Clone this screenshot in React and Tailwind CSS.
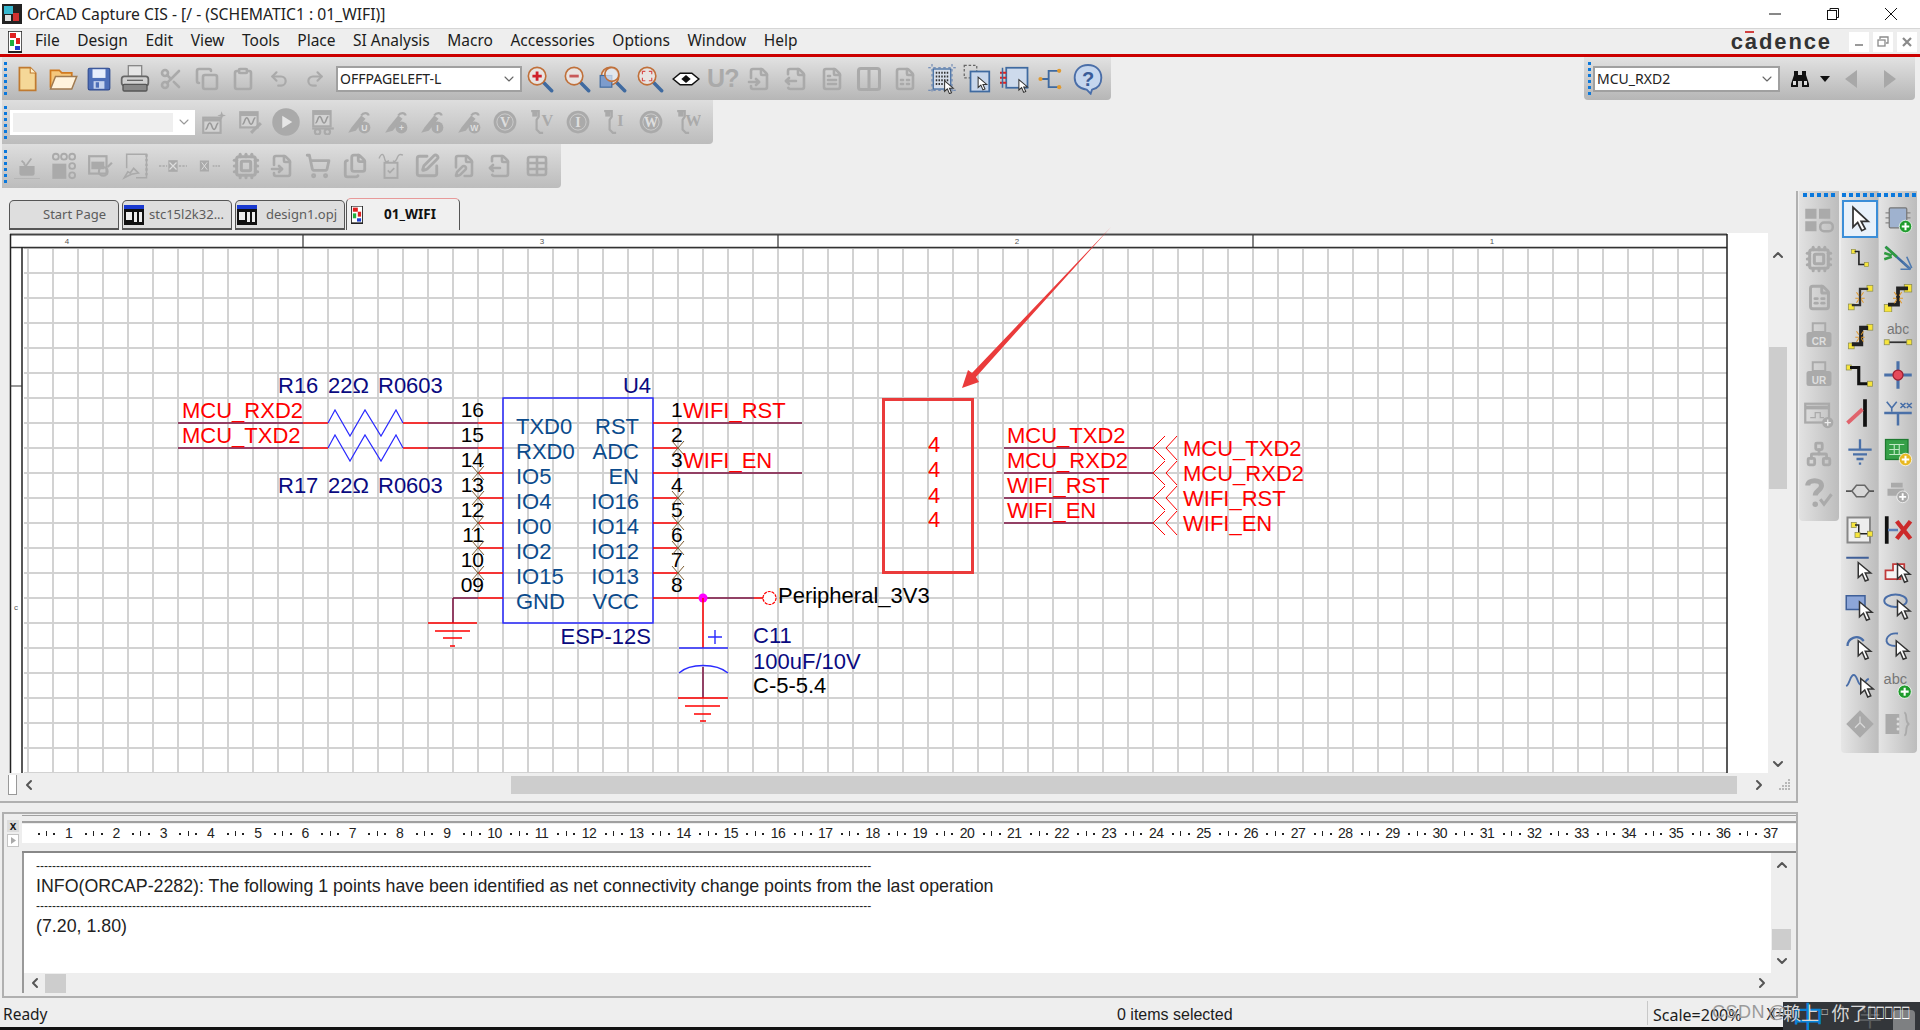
import React from "react";
import {
  Scissors, Copy, Clipboard, Undo2, Redo2, FileInput, FileOutput, FileText, Columns2, FileSpreadsheet,
  ChevronDown, ChevronUp, ChevronLeft, ChevronRight, Cpu, Network, ShoppingCart, Files, SquarePen, FilePen, Table,
} from "lucide-react";

const GRAY = "#aaaaaa";

const Svg = ({ children, s = 26 }) => (
  <svg width={s} height={s} viewBox="0 0 24 24" fill="none">
    {children}
  </svg>
);

const Grip = () => (
  <div className="flex flex-col gap-[3px]">
    {[0, 1, 2, 3, 4, 5].map((i) => (
      <span key={i} className="h-[3px] w-[3px] bg-[#0a78dc]" />
    ))}
  </div>
);

const GripRow = ({ n }) => (
  <div className="flex justify-center gap-[3px] h-[4px]">
    {Array.from({ length: n }).map((_, i) => (
      <span key={i} className="h-[4px] w-[4px] bg-[#0a78dc]" />
    ))}
  </div>
);

const Gray = ({ icon: Icon, s = 24 }) => <Icon size={s} color={GRAY} strokeWidth={2.6} />;

const Mag = ({ children }) => (
  <Svg s={28}>
    <path d="M14 14l8 8" stroke="#3f6aa0" strokeWidth="3" strokeLinecap="round" />
    <circle cx="9.5" cy="9.5" r="7.5" fill="#e8e4e2" stroke="#c0703a" strokeWidth="1.4" />
    {children}
  </Svg>
);

const Cursor = ({ x = 9, y = 7, k = 0.8 }) => (
  <path
    transform={`translate(${x} ${y}) scale(${k})`}
    d="M2 1v15l4-3.5 3 7 3-1.2-3-6.8h5.5z"
    fill="#fff"
    stroke="#333"
    strokeWidth="1.5"
  />
);

const Yel = ({ x, y, s = 4 }) => <rect x={x} y={y} width={s} height={s} fill="#f7e53b" stroke="#8a8a50" strokeWidth="0.6" />;

const Wave = ({ x = 3, y = 6 }) => (
  <g stroke={GRAY} strokeWidth="2">
    <rect x={x} y={y} width="16" height="14" fill="#d2d2d2" />
    <path d={`M${x} ${y + 2}h16`} strokeWidth="3" />
    <path d={`M${x + 2} ${y + 11}c2 0 2-6 4-6s2 6 4 6 2-6 4-6`} stroke="#999" strokeWidth="1.4" />
  </g>
);

const Probe = ({ l }) => (
  <Svg>
    <path d="M2 22l3-5 9-11 4 3-9 11z" fill={GRAY} />
    <path d="M14 6c2-3 6-3 7 0" stroke={GRAY} strokeWidth="2" />
    <circle cx="17" cy="17" r="5.5" fill={GRAY} />
    <text x="17" y="20" textAnchor="middle" fontSize="8" fontWeight="700" fill="#dddddd" fontFamily="Liberation Sans, sans-serif">{l}</text>
  </Svg>
);

const Meter = ({ l }) => (
  <Svg>
    <circle cx="12" cy="12" r="10.5" fill={GRAY} />
    <circle cx="12" cy="12" r="7.5" stroke="#cfcfcf" strokeWidth="0.8" />
    <text x="12" y="17" textAnchor="middle" fontSize="13" fontWeight="700" fill="#dedede" fontFamily="Liberation Serif, serif">{l}</text>
  </Svg>
);

const Marker = ({ l }) => (
  <Svg>
    <path d="M2 2h7v5l-2 3v9l3 3h3" stroke={GRAY} strokeWidth="2" />
    <path d="M3 2h5v5H3z" fill={GRAY} />
    <text x="17" y="16" textAnchor="middle" fontSize="15" fontWeight="700" fill={GRAY} fontFamily="Liberation Serif, serif">{l}</text>
  </Svg>
);

const row1a = [
  <Svg key="new"><path d="M5 1.5h10l5 5v16H5z" fill="#f5d898" stroke="#c07a30" strokeWidth="1.6" /><path d="M15 1.5v5h5" fill="#fff2cc" stroke="#c07a30" /></Svg>,
  <Svg key="open" s={30}><path d="M2 19V5h7l2 2h8v3" fill="#f5c77c" stroke="#d07a20" strokeWidth="1.4" /><path d="M2 20l4-10h17l-4 10z" fill="#fff3dd" stroke="#a07a50" strokeWidth="1.2" /></Svg>,
  <Svg key="save"><rect x="2" y="2" width="20" height="20" rx="1.5" fill="#4e6fb8" stroke="#2e4a90" /><rect x="6" y="3" width="12" height="8" fill="#e8eefb" /><rect x="7" y="14" width="10" height="7" fill="#c6d3ee" /><rect x="9" y="15" width="3" height="5" fill="#4e6fb8" /></Svg>,
  <Svg key="print" s={32}><rect x="7" y="2" width="10" height="8" fill="#e6e6e6" stroke="#888" /><rect x="2" y="10" width="20" height="7" rx="2" fill="#d0d0d0" stroke="#666" strokeWidth="1.3" /><rect x="3" y="16" width="18" height="5" rx="1" fill="#888" stroke="#555" /><path d="M6 13h12" stroke="#666" /></Svg>,
  <Gray key="cut" icon={Scissors} />,
  <Gray key="copy" icon={Copy} />,
  <Gray key="paste" icon={Clipboard} />,
  <Gray key="undo" icon={Undo2} s={20} />,
  <Gray key="redo" icon={Redo2} s={20} />,
];

const row1b = [
  <Mag key="a"><path d="M5.5 9.5h8M9.5 5.5v8" stroke="#d0202a" strokeWidth="2.4" /></Mag>,
  <Mag key="b"><path d="M5.5 9.5h8" stroke="#c85a5a" strokeWidth="2.4" /></Mag>,
  <Mag key="c"><rect x="1" y="9" width="10" height="10" fill="#7d9ccc" stroke="#3f6aa0" /><circle cx="11" cy="8" r="6" fill="#dfe7f2" fillOpacity="0.7" stroke="#c0703a" strokeWidth="1.4" /></Mag>,
  <Mag key="d"><path d="M5.500 8V5.500h2.500M11 5.500h2.500V8M13.500 11v2.500H11M8 13.500H5.500V11" stroke="#d85050" strokeWidth="1" /></Mag>,
  <Svg key="e" s={28}><path d="M1 12l6-5h10l6 5-6 5H7z" fill="#fff" stroke="#111" strokeWidth="1.3" /><path d="M12 8.5l4 3.5-4 3.5L8 12z" fill="#111" /></Svg>,
  <span key="f" className="font-['Liberation_Sans',sans-serif] text-[25px] font-bold leading-none tracking-[-1px] text-[#aaaaaa]">U?</span>,
  <Gray key="g" icon={FileInput} />,
  <Gray key="h" icon={FileOutput} />,
  <Gray key="i" icon={FileText} />,
  <Gray key="j" icon={Columns2} s={28} />,
  <Gray key="k" icon={FileSpreadsheet} />,
  <Svg key="l" s={30}><rect x="5" y="4" width="14" height="16" fill="#d7deea" stroke="#3f6aa0" /><path d="M7 7h10M7 10h10M7 13h10M7 16h7" stroke="#333" strokeWidth="1.5" strokeDasharray="1.2 1" /><path d="M1 3h22M1 21h22M4 0v24M20 0v24" stroke="#5c7db0" strokeDasharray="2 2" strokeWidth="0.8" /><Cursor x={13} y={13} k={0.55} /></Svg>,
  <Svg key="m" s={30}><rect x="1" y="1" width="10" height="10" stroke="#666" strokeDasharray="2 1.5" /><rect x="6" y="6" width="15" height="16" fill="#c8d6ea" stroke="#3f6aa0" strokeWidth="1.4" /><Cursor x={11} y={10} k={0.55} /></Svg>,
  <Svg key="n" s={30}><rect x="5" y="3" width="17" height="16" fill="#cddaec" stroke="#3f6aa0" strokeWidth="1.4" /><path d="M0 7h5M0 11h5M0 15h5" stroke="#e02020" strokeWidth="1.6" /><path d="M2 3v16" stroke="#3f6aa0" strokeWidth="1.2" /><Cursor x={14} y={12} k={0.55} /></Svg>,
  <Svg key="o" s={28}><path d="M3 12h7M10 12V5h8M10 12v7h8" stroke="#3f6aa0" strokeWidth="1.6" /><circle cx="3" cy="12" r="1.8" fill="#e09a30" /><circle cx="19" cy="5" r="1.8" fill="#e09a30" /><circle cx="19" cy="19" r="1.8" fill="#e09a30" /></Svg>,
  <Svg key="p" s={32}><path d="M12 1.5c6 0 10 4 10 9.5 0 5-3 8-7 9l-1 3-3-3C6 19 2 16 2 11c0-5.500 4-9.500 10-9.500z" fill="#c5d6ee" stroke="#4a6ea8" strokeWidth="1.4" /><text x="12" y="17" textAnchor="middle" fontSize="15" fontWeight="700" fill="#3a5c98" fontFamily="Liberation Sans, sans-serif">?</text></Svg>,
];

const row2 = [
  <Svg key="a"><Wave y={8} /><path d="M20 2l1 3 3 1-3 1-1 3-1-3-3-1 3-1z" fill={GRAY} /></Svg>,
  <Svg key="b"><Wave y={3} /><path d="M12 21l9-9 2 2-9 9z" fill={GRAY} /></Svg>,
  <Svg key="c" s={30}><circle cx="12" cy="12" r="11" fill={GRAY} /><path d="M9 7l8 5-8 5z" fill="#e6e6e6" /></Svg>,
  <Svg key="d"><Wave y={2} /><circle cx="7" cy="21" r="2.500" stroke={GRAY} strokeWidth="2" /><circle cx="16" cy="21" r="2.500" stroke={GRAY} strokeWidth="2" /><path d="M2 18h20" stroke={GRAY} strokeWidth="2" /></Svg>,
  <Probe key="e" l="U" />,
  <Probe key="f" l="+" />,
  <Probe key="g" l="I" />,
  <Probe key="h" l="W" />,
  <Meter key="i" l="V" />,
  <Marker key="j" l="V" />,
  <Meter key="k" l="I" />,
  <Marker key="l" l="I" />,
  <Meter key="m" l="W" />,
  <Marker key="n" l="W" />,
];

const row3 = [
  <Svg key="a"><path d="M5 12h14v7a2 2 0 01-2 2H7a2 2 0 01-2-2z" fill={GRAY} /><path d="M9 10l2 2 5-7M7 7l3 3" stroke={GRAY} strokeWidth="1.6" /><path d="M0 24h24" stroke={GRAY} /></Svg>,
  <Svg key="b" s={28}><rect x="2" y="10" width="12" height="13" fill={GRAY} /><circle cx="5" cy="4" r="2.500" stroke={GRAY} strokeWidth="1.6" /><circle cx="12" cy="4" r="2.500" stroke={GRAY} strokeWidth="1.6" /><circle cx="19" cy="4" r="2.500" stroke={GRAY} strokeWidth="1.6" /><circle cx="19" cy="12" r="2.500" stroke={GRAY} strokeWidth="1.6" /><circle cx="19" cy="20" r="2.500" stroke={GRAY} strokeWidth="1.6" /></Svg>,
  <Svg key="c"><rect x="2" y="3" width="16" height="16" stroke={GRAY} strokeWidth="2" /><rect x="4" y="8" width="12" height="7" fill={GRAY} /><circle cx="15" cy="17" r="4" stroke={GRAY} strokeWidth="2" /><path d="M19 13l4-4" stroke={GRAY} strokeWidth="2" /></Svg>,
  <Svg key="d" s={28}><path d="M4 14V2h17v20H12" stroke={GRAY} strokeWidth="1.3" /><path d="M21 2v20" stroke={GRAY} strokeWidth="2" strokeDasharray="2 2" /><path d="M2 22l3-5 2 1 3-4 4 4-6 1z" stroke={GRAY} strokeWidth="1.4" /></Svg>,
  <Svg key="e" s={28}><path d="M0 12h7M17 12h7" stroke={GRAY} strokeWidth="1.4" strokeDasharray="2 1" /><rect x="8" y="7" width="8" height="10" fill={GRAY} /><path d="M9 9l6 6M15 9l-6 6" stroke="#ddd" /></Svg>,
  <Svg key="f" s={22}><path d="M16 12h8" stroke={GRAY} strokeWidth="1.4" strokeDasharray="2 1" /><rect x="2" y="6" width="10" height="12" fill={GRAY} /><path d="M4 8l6 8M10 8l-6 8" stroke="#ddd" /></Svg>,
  <Gray key="g" icon={Cpu} s={28} />,
  <Gray key="h" icon={FileInput} />,
  <Gray key="i" icon={ShoppingCart} s={26} />,
  <Gray key="j" icon={Files} s={26} />,
  <Svg key="k"><path d="M1 5c2-5 4-5 5 0s3 3 4 2M14 7c1 2 3 0 4-3s3-3 5-2" stroke={GRAY} strokeWidth="1.3" /><rect x="6" y="9" width="12" height="14" stroke={GRAY} strokeWidth="1.8" /><path d="M9 16l2 2 4-4" stroke={GRAY} strokeWidth="1.5" /></Svg>,
  <Gray key="l" icon={SquarePen} s={26} />,
  <Gray key="m" icon={FilePen} />,
  <Gray key="n" icon={FileOutput} />,
  <Gray key="o" icon={Table} />,
];

const sideLeft = [
  <Svg key="a" s={30}><rect x="1" y="3" width="9" height="8" fill={GRAY} /><rect x="12" y="3" width="9" height="8" fill={GRAY} /><rect x="1" y="13" width="9" height="8" fill={GRAY} /><rect x="13" y="14" width="10" height="7" rx="3" stroke={GRAY} strokeWidth="2" /></Svg>,
  <Gray key="b" icon={Cpu} s={28} />,
  <Gray key="c" icon={FileSpreadsheet} s={27} />,
  <Svg key="d" s={30}><rect x="7" y="1" width="10" height="7" stroke={GRAY} strokeWidth="1.6" /><rect x="2" y="8" width="20" height="12" rx="2" fill={GRAY} /><text x="12" y="18" textAnchor="middle" fontSize="8" fontWeight="700" fill="#dedede" fontFamily="Liberation Sans, sans-serif">CR</text></Svg>,
  <Svg key="e" s={30}><rect x="7" y="1" width="10" height="7" stroke={GRAY} strokeWidth="1.6" /><rect x="2" y="8" width="20" height="12" rx="2" fill={GRAY} /><text x="12" y="18" textAnchor="middle" fontSize="8" fontWeight="700" fill="#dedede" fontFamily="Liberation Sans, sans-serif">UR</text></Svg>,
  <Svg key="f" s={30}><rect x="1" y="3" width="19" height="15" stroke={GRAY} strokeWidth="1.8" /><path d="M1 6h19" stroke={GRAY} strokeWidth="3" /><path d="M5 14h4v-4h4v4h3" stroke={GRAY} /><circle cx="19" cy="18" r="4.500" fill={GRAY} /><path d="M19 15.500v5M16.500 18h5" stroke="#eee" /></Svg>,
  <Gray key="g" icon={Network} s={26} />,
  <Svg key="h" s={30}><path d="M3 6c0-5 11-5 11 0 0 4-5 4-5 8" stroke={GRAY} strokeWidth="4" /><circle cx="9" cy="21" r="2.200" fill={GRAY} /><path d="M13 17l3 4 6-8" stroke={GRAY} strokeWidth="2.500" /></Svg>,
];

const Plus = ({ c = "#1f9c2d", x = 18, y = 18, r = 5 }) => (
  <g>
    <circle cx={x} cy={y} r={r} fill={c} stroke="#fff" strokeWidth="0.6" />
    <path d={`M${x - 3} ${y}h6M${x} ${y - 3}v6`} stroke="#fff" strokeWidth="1.600" />
  </g>
);

const Spark = () => (
  <path d="M9 8l2 3M15 8l-2 3M8 13h3M16 13h-3M9 17l2-3M15 17l-2-3" stroke="#e09a30" strokeWidth="0.9" />
);

const sideRight = [
  <Svg key="1a" s={28}><path d="M6 2v17l4-4 3.500 7 3-1.500-3.500-6.500h6z" fill="#fff" stroke="#333" strokeWidth="1.500" /></Svg>,
  <Svg key="1b" s={30}><path d="M2 7h3M2 11h3M2 15h3M19 7h3M19 11h3" stroke="#888" /><rect x="5" y="3" width="14" height="16" rx="1" fill="#9fb2cf" stroke="#777" /><Plus /></Svg>,
  <Svg key="2a"><Yel x={4} y={4} /><path d="M7 6h4v12h5" stroke="#222" strokeWidth="1.500" /><Yel x={16} y={16} /></Svg>,
  <Svg key="2b" s={30}><path d="M2 3l20 18" stroke="#3f6aa0" strokeWidth="2" /><path d="M2 3l9 8M1 8l6 2M1 13l6-2" stroke="#2f9a3f" strokeWidth="2" /><path d="M16 15l6 6M19 11l4 9M14 21l8 0" stroke="#4f7ab0" strokeWidth="1.300" /></Svg>,
  <Svg key="3a" s={28}><Yel x={2} y={18} s={5} /><Yel x={18} y={2} s={5} /><path d="M5 19h7V5h7" stroke="#333" strokeWidth="2" /><Spark /></Svg>,
  <Svg key="3b" s={30}><Yel x={1} y={18} s={6} /><Yel x={17} y={2} s={6} /><path d="M4 18h8V5h8" stroke="#222" strokeWidth="3" /><Spark /></Svg>,
  <Svg key="4a" s={28}><Yel x={2} y={18} s={5} /><Yel x={18} y={2} s={5} /><path d="M5 19h8V5h6" stroke="#222" strokeWidth="3.500" /><Spark /></Svg>,
  <Svg key="4b" s={30}><text x="12" y="10" textAnchor="middle" fontSize="11" fill="#777" fontFamily="Liberation Sans, sans-serif">abc</text><path d="M3 17h18" stroke="#333" strokeWidth="1.400" /><Yel x={1} y={15} /><Yel x={19} y={15} /></Svg>,
  <Svg key="5a" s={30}><Yel x={1} y={4} /><path d="M4 6h7v13h8" stroke="#111" strokeWidth="2.500" /><Yel x={18} y={17} /></Svg>,
  <Svg key="5b" s={30}><path d="M1 12h22M12 1v22" stroke="#4a70a8" strokeWidth="2.500" /><circle cx="12" cy="12" r="4" fill="#e64a5a" stroke="#a02030" /></Svg>,
  <Svg key="6a" s={30}><path d="M16 1v22" stroke="#111" strokeWidth="3" /><path d="M2 20L14 9" stroke="#e0636c" strokeWidth="3" /></Svg>,
  <Svg key="6b" s={30}><path d="M1 12h22M12 12v10" stroke="#4a70a8" strokeWidth="2" /><path d="M3 3l4 5 4-5M7 8v3M14 4l4 4M18 4l-4 4M19 4l4 4M23 4l-4 4" stroke="#4a70a8" strokeWidth="1.300" /></Svg>,
  <Svg key="7a" s={28}><path d="M12 1v9M2 10h20M6 14h12M9 18h6M11 22h2" stroke="#4a70a8" strokeWidth="2" /></Svg>,
  <Svg key="7b" s={30}><rect x="2" y="2" width="18" height="16" fill="#36a048" stroke="#1e7a30" /><path d="M5 6h12M5 10h8M5 14h10M9 6v8M13 6v8" stroke="#bfe8c4" strokeWidth="0.900" /><Plus c="#e8b820" x={18} y={18} /></Svg>,
  <Svg key="8a" s={28}><path d="M0 12h5M19 12h5" stroke="#555" strokeWidth="1.500" /><path d="M5 12l4-5h7l4 5-4 5H9z" fill="#d8d8d8" stroke="#666" strokeWidth="1.300" /></Svg>,
  <Svg key="8b" s={28}><path d="M6 5h10v4H6zM3 10h14v6H3z" fill={GRAY} /><Plus c={GRAY} x={16} y={17} /></Svg>,
  <Svg key="9a" s={30}><rect x="2" y="2" width="18" height="20" fill="#eee" stroke="#888" strokeWidth="1.600" /><Yel x={5} y={6} /><path d="M8 8h3v7h7" stroke="#222" strokeWidth="1.200" /><Yel x={8} y={14} /><Yel x={18} y={13} /></Svg>,
  <Svg key="9b" s={30}><path d="M3 1v22" stroke="#111" strokeWidth="3" /><path d="M4 12h8" stroke="#5f80b8" strokeWidth="2" /><path d="M11 5l11 14M22 5L11 19" stroke="#cc2a2a" strokeWidth="3.500" /></Svg>,
  <Svg key="10a" s={30}><path d="M1 3h18" stroke="#3f5f98" strokeWidth="1.600" /><Cursor x={9} y={6} /></Svg>,
  <Svg key="10b" s={30}><path d="M2 13h6V8h9v5h-3v7H2z" fill="#f4f4f4" stroke="#c03a3a" strokeWidth="1.400" /><Cursor x={10} y={7} /></Svg>,
  <Svg key="11a" s={30}><rect x="1" y="3" width="15" height="11" fill="#8da6d8" stroke="#3f5f98" strokeWidth="1.200" /><Cursor x={10} y={7} /></Svg>,
  <Svg key="11b" s={30}><ellipse cx="10" cy="7" rx="9" ry="5" stroke="#4a6ea8" strokeWidth="1.500" /><Cursor x={10} y={6} /></Svg>,
  <Svg key="12a" s={30}><path d="M2 12c0-6 8-10 13-4" stroke="#4a6ea8" strokeWidth="1.800" /><Cursor x={9} y={7} /></Svg>,
  <Svg key="12b" s={30}><path d="M12 2C4 1 0 8 5 11c1 .6 3 1 5 1" stroke="#4a6ea8" strokeWidth="1.500" /><Cursor x={9} y={7} /></Svg>,
  <Svg key="13a" s={30}><path d="M1 13c3-2 3-9 6-9s3 8 6 8 3-4 6-5" stroke="#4a6ea8" strokeWidth="1.500" /><Cursor x={11} y={6} /></Svg>,
  <Svg key="13b" s={32}><text x="10" y="11" textAnchor="middle" fontSize="11" fill="#777" fontFamily="Liberation Sans, sans-serif">abc</text><Plus x={17} y={17} /></Svg>,
  <Svg key="14a" s={30}><path d="M12 1l11 11-11 11L1 12z" fill={GRAY} /><path d="M12 6v5M8 15l4-4 4 4" stroke="#d8d8d8" /></Svg>,
  <Svg key="14b" s={30}><path d="M2 4h11v16H2z" fill={GRAY} /><path d="M17 3c3 0 0 8 4 9-4 1-1 9-4 9" stroke={GRAY} strokeWidth="1.500" /><circle cx="12" cy="8" r="1.200" fill="#ddd" /><circle cx="12" cy="12" r="1.200" fill="#ddd" /><circle cx="12" cy="16" r="1.200" fill="#ddd" /></Svg>,
];

const RED = "#ff0000";
const WIRE = "#7d1040";
const NAVY = "#0a0a80";
const PIN = "#0b4b8c";
const BLUE = "#2a2aff";
const BOX = "#ea3b3b";

const leftNames = ["TXD0", "RXD0", "IO5", "IO4", "IO0", "IO2", "IO15", "GND"];
const rightNames = ["RST", "ADC", "EN", "IO16", "IO14", "IO12", "IO13", "VCC"];
const leftNums = ["16", "15", "14", "13", "12", "11", "10", "09"];
const rightNums = ["1", "2", "3", "4", "5", "6", "7", "8"];

const zig = (y) => `M328 ${y}L335 ${y - 13}L350 ${y + 13}L365 ${y - 13}L381 ${y + 13}L396 ${y - 13}L403 ${y}`;

const NoConnect = ({ x, y }) => (
  <path d={`M${x - 6} ${y - 7}L${x + 6} ${y + 7}M${x + 6} ${y - 7}L${x - 6} ${y + 7}`} stroke="#7a5a30" strokeWidth="1" />
);

const Schematic = () => (
  <svg viewBox="10 233 1758 540" className="block h-[540px] w-[1758px] overflow-visible bg-white font-['Liberation_Sans',sans-serif]">
    <defs>
      <pattern id="grid" x="2" y="22" width="25" height="25" patternUnits="userSpaceOnUse">
        <rect width="25" height="2" fill="#d2d2d2" />
        <rect width="2" height="25" fill="#d2d2d2" />
      </pattern>
    </defs>
    <rect x="24" y="248" width="1703" height="525" fill="url(#grid)" />

    {/* sheet frame */}
    <path d="M10 234.500H1727" stroke="#444" strokeWidth="2" />
    <path d="M10 247.500H1727" stroke="#333" strokeWidth="1.500" />
    <path d="M10.500 234V773M22 247V773M1727 234V773" stroke="#222" strokeWidth="1.500" />
    <path d="M303 235V247M778 235V247M1253 235V247M10 386H22" stroke="#333" strokeWidth="1.200" />
    <g fontSize="8" fill="#555" textAnchor="middle">
      <text x="67" y="244">4</text>
      <text x="542" y="244">3</text>
      <text x="1017" y="244">2</text>
      <text x="1492" y="244">1</text>
      <text x="16" y="610">c</text>
    </g>

    {/* input nets and resistors */}
    <path d="M178 423H303M178 448H303M428 423H478M428 448H478" stroke={WIRE} strokeWidth="1.600" />
    <path d="M303 423H328M303 448H328M403 423H428M403 448H428M478 423H503M478 448H503" stroke={RED} strokeWidth="1.500" />
    <path d={zig(423)} fill="none" stroke={BLUE} strokeWidth="1.200" />
    <path d={zig(448)} fill="none" stroke={BLUE} strokeWidth="1.200" />
    <g fontSize="22" fill={RED}>
      <text x="182" y="418">MCU_RXD2</text>
      <text x="182" y="443">MCU_TXD2</text>
    </g>
    <g fontSize="22" fill={NAVY}>
      <text x="278" y="393">R16</text>
      <text x="328" y="393">22Ω</text>
      <text x="378" y="393">R0603</text>
      <text x="278" y="493">R17</text>
      <text x="328" y="493">22Ω</text>
      <text x="378" y="493">R0603</text>
      <text x="651" y="393" textAnchor="end">U4</text>
      <text x="651" y="644" textAnchor="end">ESP-12S</text>
      <text x="753" y="643">C11</text>
      <text x="753" y="669">100uF/10V</text>
    </g>

    {/* U4 */}
    <rect x="503" y="398" width="150" height="225" fill="none" stroke={BLUE} strokeWidth="1.500" />
    <g fontSize="22" fill={PIN}>
      {leftNames.map((n, i) => (
        <text key={n} x="516" y={434 + i * 25}>{n}</text>
      ))}
      {rightNames.map((n, i) => (
        <text key={n} x="639" y={434 + i * 25} textAnchor="end">{n}</text>
      ))}
    </g>
    <g fontSize="21" fill="#000">
      {leftNums.map((n, i) => (
        <text key={n} x="484" y={417 + i * 25} textAnchor="end">{n}</text>
      ))}
      {rightNums.map((n, i) => (
        <text key={n} x="671" y={417 + i * 25}>{n}</text>
      ))}
    </g>
    {[473, 498, 523, 548, 573].map((y) => (
      <g key={y}>
        <path d={`M478 ${y}H503`} stroke={RED} strokeWidth="1.500" />
        <NoConnect x={478} y={y} />
      </g>
    ))}
    {[448, 498, 523, 548, 573].map((y) => (
      <g key={y}>
        <path d={`M653 ${y}H678`} stroke={RED} strokeWidth="1.500" />
        <NoConnect x={678} y={y} />
      </g>
    ))}

    {/* GND */}
    <path d="M453 598H478V598M453 598V623" stroke={WIRE} strokeWidth="1.500" fill="none" />
    <path d="M478 598H503M428 623H477M435 631H470M443 638H462M450 646H455" stroke={RED} strokeWidth="1.500" />

    {/* right nets */}
    <path d="M678 423H802M678 473H802" stroke={WIRE} strokeWidth="1.600" />
    <path d="M653 423H678M653 473H678" stroke={RED} strokeWidth="1.500" />
    <g fontSize="22" fill={RED}>
      <text x="683" y="418">WIFI_RST</text>
      <text x="683" y="468">WIFI_EN</text>
    </g>

    {/* VCC, cap */}
    <path d="M653 598H703" stroke={RED} strokeWidth="1.500" />
    <path d="M703 598H754" stroke={WIRE} strokeWidth="1.500" />
    <path d="M754 598H763" stroke={RED} strokeWidth="1.500" />
    <circle cx="769.500" cy="598" r="6.500" fill="#fff" stroke={RED} strokeWidth="1.200" strokeDasharray="3 1" />
    <text x="778" y="603" fontSize="22" fill="#000">Peripheral_3V3</text>
    <circle cx="703" cy="598" r="4.500" fill="#ff00ff" />
    <path d="M703 598V648" stroke={RED} strokeWidth="1.500" />
    <path d="M679 648H728M708 637H722M715 630V644" stroke={BLUE} strokeWidth="1.400" />
    <path d="M679 673C690 663 716 663 728 673" fill="none" stroke={BLUE} strokeWidth="1.400" />
    <path d="M703 667V698" stroke={WIRE} strokeWidth="1.500" />
    <path d="M678 698H728M685 706H720M694 714H711M700 721H706" stroke={RED} strokeWidth="1.500" />
    <text x="753" y="693" fontSize="22" fill="#000">C-5-5.4</text>

    {/* highlight box and arrow */}
    <rect x="883.500" y="399.500" width="89" height="173" fill="none" stroke={BOX} strokeWidth="3" />
    <g fontSize="22" fill={RED} textAnchor="middle">
      <text x="934" y="452">4</text>
      <text x="934" y="477">4</text>
      <text x="934" y="503">4</text>
      <text x="934" y="527">4</text>
    </g>
    <path d="M1111 227L976 377L979 382L962 388L968 370L972 373Z" fill={BOX} />

    {/* offpage connectors */}
    {[448, 473, 498, 523].map((y) => (
      <g key={y} fill="none">
        <path d={`M1004 ${y}H1153`} stroke={WIRE} strokeWidth="1.600" />
        <path d={`M1165 ${y - 12}L1153 ${y}L1165 ${y + 12}M1177 ${y - 12}L1166 ${y}L1177 ${y + 12}`} stroke={RED} strokeWidth="1" />
      </g>
    ))}
    <g fontSize="22" fill={RED}>
      <text x="1007" y="443">MCU_TXD2</text>
      <text x="1007" y="468">MCU_RXD2</text>
      <text x="1007" y="493">WIFI_RST</text>
      <text x="1007" y="518">WIFI_EN</text>
      <text x="1183" y="456">MCU_TXD2</text>
      <text x="1183" y="481">MCU_RXD2</text>
      <text x="1183" y="506">WIFI_RST</text>
      <text x="1183" y="531">WIFI_EN</text>
    </g>
  </svg>
);

const Chev = ({ icon: Icon }) => <Icon size={16} color="#555555" strokeWidth={3} />;

const TabIcon = () => (
  <svg width="20" height="20" viewBox="0 0 20 20" className="shrink-0">
    <rect width="20" height="20" fill="#111" />
    <rect width="20" height="4" fill="#1a3ad0" />
    <rect x="2" y="7" width="6" height="8" fill="#eee" />
    <rect x="10" y="7" width="3" height="10" fill="#eee" />
    <rect x="15" y="7" width="3" height="10" fill="#eee" />
  </svg>
);

const DocIcon = ({ w = 14, h = 22 }) => (
  <svg width={w} height={h} viewBox="0 0 14 22" className="shrink-0">
    <rect width="14" height="22" fill="#fff" stroke="#222" strokeWidth="1.500" />
    <rect x="2" y="2" width="6" height="5" fill="#e02020" />
    <rect x="8" y="7" width="4" height="6" fill="#e02020" />
    <rect x="2" y="9" width="4" height="6" fill="#20b040" />
    <rect x="7" y="15" width="5" height="4" fill="#2040d0" />
    <rect y="20" width="14" height="2" fill="#222" />
  </svg>
);

const Tab = ({ label, w, icon, cls = "" }) => (
  <div className={`flex h-[30px] items-center rounded-t-[5px] border border-b-2 border-[#555555] bg-[#dedede] text-[13px] text-[#5c5c5c] ${w} ${cls}`}>
    {icon}
    <span className="truncate">{label}</span>
  </div>
);

const menus = ["File", "Design", "Edit", "View", "Tools", "Place", "SI Analysis", "Macro", "Accessories", "Options", "Window", "Help"];

const App = () => {
  return (
    <div className="relative flex h-[1030px] w-[1920px] flex-col overflow-hidden bg-[#eeeeee] font-['Noto_Sans',sans-serif] text-[#1c1c1c]">
      {/* title bar */}
      <div className="flex h-[29px] shrink-0 items-center border-b border-[#d6d6d6] bg-white pl-[2px]">
        <svg width="20" height="20" viewBox="0 0 20 20">
          <rect width="20" height="20" fill="#222" />
          <rect x="2" y="2" width="9" height="8" fill="#36b8d0" />
          <rect x="11" y="9" width="6" height="8" fill="#d03030" />
          <rect x="3" y="11" width="6" height="6" fill="#e0e0e0" />
        </svg>
        <span className="ml-[5px] mt-[1px] text-[15.700px] leading-none text-[#222222]">OrCAD Capture CIS - [/ - (SCHEMATIC1 : 01_WIFI)]</span>
        <div className="ml-auto flex h-full">
          <div className="flex w-[58px] items-center justify-center">
            <svg width="14" height="14" viewBox="0 0 14 14"><path d="M1 7h12" stroke="#111" strokeWidth="1" /></svg>
          </div>
          <div className="flex w-[58px] items-center justify-center">
            <svg width="14" height="14" viewBox="0 0 14 14" fill="none" stroke="#111"><rect x="1.500" y="3.500" width="9" height="9" /><path d="M4 3V1.500h8.500v9H11" /></svg>
          </div>
          <div className="flex w-[58px] items-center justify-center">
            <svg width="14" height="14" viewBox="0 0 14 14"><path d="M1 1l12 12M13 1L1 13" stroke="#111" /></svg>
          </div>
        </div>
      </div>

      {/* menu bar */}
      <div className="flex h-[28px] shrink-0 items-center border-b-[3px] border-[#cc0000] pl-[8px] text-[15.500px]">
        <DocIcon w={14} h={22} />
        <div className="mb-[2px] ml-[13px] flex gap-[17.500px]">
          {menus.map((m) => (
            <span key={m}>{m}</span>
          ))}
        </div>
        <div className="ml-auto flex items-center pr-[3px]">
          <div className="relative mr-[17px] font-['Liberation_Sans',sans-serif] text-[22px] font-bold leading-none tracking-[1.900px] text-[#333333]">
            cadence
            <span className="absolute left-[14px] top-[0px] h-[2px] w-[9px] bg-[#d04040]" />
          </div>
          <div className="flex gap-[4px]">
            <div className="flex h-[20px] w-[20px] items-center justify-center bg-white">
              <span className="mt-[7px] h-[2px] w-[8px] bg-[#9a9a9a]" />
            </div>
            <div className="flex h-[20px] w-[20px] items-center justify-center bg-white">
              <svg width="12" height="12" viewBox="0 0 12 12" fill="none" stroke="#8a8a8a" strokeWidth="1.300"><rect x="1" y="4" width="7" height="6" /><path d="M3 3V1h8v6H9" /></svg>
            </div>
            <div className="flex h-[20px] w-[20px] items-center justify-center bg-white">
              <svg width="12" height="12" viewBox="0 0 12 12"><path d="M2 2l8 8M10 2l-8 8" stroke="#8a8a8a" strokeWidth="2.200" /></svg>
            </div>
          </div>
        </div>
      </div>

      {/* toolbars */}
      <div className="relative h-[132px] shrink-0">
        <div className="flex h-[43px] justify-between">
          <div className="ml-[2px] flex w-[1109px] items-center rounded-br-[4px] bg-linear-to-b from-[#e2e2e2] to-[#b6b6b6] pl-[2px]">
            <Grip />
            <div className="ml-[2px] flex">
              {row1a.map((ic) => (
                <div key={ic.key} className="flex h-[36px] w-[36px] items-center justify-center">{ic}</div>
              ))}
            </div>
            <div className="ml-[3px] flex h-[26px] w-[186px] shrink-0 items-center justify-between border-2 border-[#a0a0a0] bg-white pl-[2px] pr-[3px] text-[14px] text-[#222222]">
              OFFPAGELEFT-L
              <ChevronDown size={16} color="#666666" strokeWidth={1.600} />
            </div>
            <div className="flex">
              {row1b.map((ic) => (
                <div key={ic.key} className="flex h-[36px] w-[36.500px] items-center justify-center">{ic}</div>
              ))}
            </div>
          </div>
          <div className="mr-[5px] flex w-[331px] items-center rounded-b-[4px] bg-linear-to-b from-[#e2e2e2] to-[#b6b6b6] pl-[4px]">
            <Grip />
            <div className="ml-[2px] flex h-[26px] w-[187px] shrink-0 items-center justify-between border-2 border-[#a0a0a0] bg-white pl-[2px] pr-[3px] text-[14px] text-[#222222]">
              MCU_RXD2
              <ChevronDown size={16} color="#666666" strokeWidth={1.600} />
            </div>
            <svg width="20" height="18" viewBox="0 0 20 18" className="ml-[10px]">
              <path d="M4 1h4v4h4V1h4v4l3 9v3h-7v-6h-4v6H1v-3l3-9z" fill="#111" />
              <rect x="3" y="11" width="3" height="4" fill="#ddd" />
              <rect x="14" y="11" width="3" height="4" fill="#ddd" />
            </svg>
            <svg width="10" height="6" viewBox="0 0 10 6" className="ml-[10px]"><path d="M0 0h10L5 6z" fill="#111" /></svg>
            <svg width="12" height="18" viewBox="0 0 12 18" className="ml-[15px]"><path d="M12 0v18L0 9z" fill="#a8a8a8" /></svg>
            <svg width="12" height="18" viewBox="0 0 12 18" className="ml-[27px]"><path d="M0 0v18l12-9z" fill="#a8a8a8" /></svg>
          </div>
        </div>
        <div className="ml-[2px] flex h-[44px] w-[711px] items-center rounded-br-[4px] bg-linear-to-b from-[#dedede] to-[#bcbcbc] pl-[2px]">
          <Grip />
          <div className="ml-[3px] flex h-[25px] w-[185px] shrink-0 items-center justify-between bg-white p-[3px]">
            <span className="h-full w-[160px] bg-[#efefef]" />
            <ChevronDown size={16} color="#999999" strokeWidth={1.600} />
          </div>
          <div className="flex">
            {row2.map((ic) => (
              <div key={ic.key} className="flex h-[36px] w-[36.500px] items-center justify-center">{ic}</div>
            ))}
          </div>
        </div>
        <div className="ml-[2px] flex h-[44px] w-[559px] items-center rounded-br-[4px] bg-linear-to-b from-[#dedede] to-[#bcbcbc] pl-[2px]">
          <Grip />
          <div className="ml-[2px] flex">
            {row3.map((ic) => (
              <div key={ic.key} className="flex h-[36px] w-[36.400px] items-center justify-center">{ic}</div>
            ))}
          </div>
        </div>
      </div>

      {/* main */}
      <div className="flex min-h-0 flex-1">
        <div className="flex w-[1798px] shrink-0 flex-col pt-[2px]">
          <div className="shrink-0 border-r-2 border-[#b0b0b0] pt-[7px]">
            {/* tabs */}
            <div className="flex h-[32px] items-end gap-[3px] pl-[9px]">
              <Tab label="Start Page" w="w-[110px]" cls="pl-[33px]" />
              <Tab label="stc15l2k32..." w="w-[110px]" icon={<TabIcon />} cls="pl-[1px] [&>span]:ml-[5px]" />
              <Tab label="design1.opj" w="w-[110px]" icon={<TabIcon />} cls="pl-[1px] [&>span]:ml-[9px]" />
              <div className="-ml-[2px] flex h-[32px] w-[114px] items-center rounded-t-[5px] border border-b-0 border-[#555555] border-t-[#e89a9a] bg-[#f0f0f0] pl-[4px]">
                <DocIcon w={12} h={18} />
                <span className="ml-[21px] text-[13.500px] font-bold text-[#111111]">01_WIFI</span>
              </div>
            </div>

            {/* schematic window */}
            <div className="h-[573px] border-b-2 border-[#b0b0b0] pl-[10px] pt-[3px]">
              <div className="flex h-[540px]">
                <Schematic />
                <div className="flex h-full w-[20px] flex-col items-center">
                  <div className="mt-[14px]"><Chev icon={ChevronUp} /></div>
                  <div className="mt-[84px] h-[142px] w-[18px] bg-[#cdcdcd]" />
                  <div className="mb-[1px] mt-auto"><Chev icon={ChevronDown} /></div>
                </div>
              </div>
              <div className="-ml-[2px] mt-[2px] flex h-[20px] items-center">
                <div className="h-[20px] w-[9px] border-x border-b border-[#999999] bg-white" />
                <div className="flex w-[23px] justify-center"><Chev icon={ChevronLeft} /></div>
                <div className="w-[471px]" />
                <div className="h-[18px] w-[1226px] bg-[#cdcdcd]" />
                <div className="flex w-[44px] justify-center"><Chev icon={ChevronRight} /></div>
                <svg width="12" height="12" viewBox="0 0 12 12" className="-ml-[2px]" fill="#b8b8b8">
                  <rect x="9" y="0" width="2" height="2" /><rect x="6" y="3" width="2" height="2" /><rect x="9" y="3" width="2" height="2" />
                  <rect x="3" y="6" width="2" height="2" /><rect x="6" y="6" width="2" height="2" /><rect x="9" y="6" width="2" height="2" />
                  <rect x="0" y="9" width="2" height="2" /><rect x="3" y="9" width="2" height="2" /><rect x="6" y="9" width="2" height="2" /><rect x="9" y="9" width="2" height="2" />
                </svg>
              </div>
            </div>
          </div>

          {/* session log */}
          <div className="ml-[2px] mt-[9px] flex h-[186px] shrink-0 border-2 border-[#b0b0b0]">
            <div className="flex w-[18px] shrink-0 flex-col items-end pr-[3px] pt-[6px]">
              <div className="flex h-[12px] w-[12px] items-center justify-center bg-[#dcdcdc] font-['Liberation_Sans',sans-serif] text-[12px] font-bold leading-none">x</div>
              <div className="mt-[2px] flex h-[13px] w-[12px] items-center justify-center border border-[#c4c4c4] bg-white">
                <svg width="5" height="7" viewBox="0 0 5 7"><path d="M0 0l5 3.500L0 7z" fill="#aaaaaa" /></svg>
              </div>
            </div>
            <div className="flex min-w-0 flex-1 flex-col">
              <div className="mt-[1px] h-[1px] bg-[#a0a0a0]" />
              <div className="mt-[5px] h-[2px] bg-[#a0a0a0]" />
              <div className="mt-[1px] flex h-[19px] shrink-0 items-center bg-white pl-[11.500px] font-['Liberation_Sans',sans-serif] text-[14px] text-[#222222]">
                {Array.from({ length: 37 }).map((_, i) => (
                  <div key={i} className="flex w-[47.280px] shrink-0 items-center justify-between pl-[4px] pr-[5px]">
                    <span className="h-[2px] w-[2px] bg-[#222222]" />
                    <span className="h-[5px] w-[1px] bg-[#222222]" />
                    <span className="h-[2px] w-[2px] bg-[#222222]" />
                    <span className="w-[14px] text-center tracking-[-0.500px]">{i + 1}</span>
                  </div>
                ))}
              </div>
              <div className="mt-[8px] h-[2px] bg-[#888888]" />
              <div className="flex h-[120px] shrink-0 border-l-2 border-[#999999]">
                <div className="flex-1 bg-white pl-[12px] pt-[3px] font-['Liberation_Sans',sans-serif] text-[17.800px] leading-[20px] text-[#222222]">
                  <div className="h-[20px] overflow-hidden text-[12px]">{"-".repeat(209)}</div>
                  <div>INFO(ORCAP-2282): The following 1 points have been identified as net connectivity change points from the last operation</div>
                  <div className="h-[20px] overflow-hidden text-[12px]">{"-".repeat(209)}</div>
                  <div>(7.20, 1.80)</div>
                </div>
                <div className="flex w-[25px] shrink-0 flex-col items-center pr-[4px]">
                  <div className="mt-[4px]"><Chev icon={ChevronUp} /></div>
                  <div className="mt-[56px] h-[21px] w-[19px] bg-[#cdcdcd]" />
                  <div className="mt-[3px]"><Chev icon={ChevronDown} /></div>
                </div>
              </div>
              <div className="flex h-[20px] items-center border-l-2 border-[#999999]">
                <div className="flex w-[21px] justify-center"><Chev icon={ChevronLeft} /></div>
                <div className="h-[19px] w-[21px] bg-[#cdcdcd]" />
                <div className="ml-auto mr-[26px]"><Chev icon={ChevronRight} /></div>
              </div>
            </div>
          </div>
        </div>

        {/* side toolbars */}
        <div className="flex w-[122px] shrink-0 items-start gap-[2px] pl-[1px] pt-[2px]">
          <div className="flex w-[40px] flex-col rounded-b-[4px] bg-linear-to-r from-[#e2e2e2] to-[#bdbdbd] pb-[9px] pt-[2px]">
            <GripRow n={5} />
            <div className="mt-[3px]">
              {sideLeft.map((ic) => (
                <div key={ic.key} className="flex h-[39px] items-center justify-center">{ic}</div>
              ))}
            </div>
          </div>
          <div className="flex w-[76px] flex-col rounded-b-[4px] bg-[linear-gradient(90deg,#e6e6e6_0%,#bdbdbd_49%,#e4e4e4_50%,#bcbcbc_100%)] pb-[10px] pt-[2px]">
            <GripRow n={11} />
            <div className="mt-[3px] grid grid-cols-2">
              {sideRight.map((ic, i) => (
                <div key={ic.key} className="flex h-[38.800px] items-center justify-center">
                  {i === 0 ? (
                    <div className="flex h-[38px] w-[36px] items-center justify-center border-2 border-[#3b8ed8] bg-[#e8f1fa]">{ic}</div>
                  ) : (
                    ic
                  )}
                </div>
              ))}
            </div>
          </div>
        </div>
      </div>

      {/* status bar */}
      <div className="flex h-[29px] shrink-0 items-center pl-[3px] pt-[5px] text-[15.500px]">
        <span className="w-[40px]">Ready</span>
        <span className="ml-[1074px] w-[420px] font-['Liberation_Sans',sans-serif] text-[16px]">0 items selected</span>
        <span className="-mt-[5px] ml-[110px] h-[24px] w-[1px] bg-[#c8c8c8]" />
        <span className="ml-[5px] text-[16px]">Scale=200%</span>
        <span className="ml-[25px]">X=</span>
      </div>
      <div className="h-[3px] shrink-0 bg-[#111111]" />

      {/* taskbar overlap and watermark */}
      <div className="absolute bottom-0 right-0 h-[28px] w-[137px] overflow-hidden bg-[#33363a]">
        <span className="absolute left-[9px] top-[-6px] font-['Noto_Sans_CJK_SC',sans-serif] text-[32px] leading-[40px] text-[#0a84d8]">中</span>
        <span className="absolute left-[58px] top-[4px] h-[4px] w-[3px] rounded-full bg-[#5a5d60]" />
        <span className="absolute left-[75px] top-[-6px] font-['Noto_Sans_CJK_SC',sans-serif] text-[24px] leading-[40px] text-[#5a5d60]">半</span>
        <span className="absolute bottom-0 left-[110px] h-[20px] w-[22px] rounded-t-[4px] bg-[#7e8082]" />
      </div>
      <div className="absolute left-[1712px] top-[1000px] flex items-center whitespace-nowrap font-['Noto_Sans_CJK_SC',sans-serif] text-[18px] leading-[24px]">
        <span className="w-[56px] font-['Liberation_Sans',sans-serif] text-[#9a9a9a] tracking-[0.500px]">CSDN</span>
        <span className="w-[15px] font-['Liberation_Sans',sans-serif] text-[#9a9a9a]">@</span>
        <span className="text-[#d8d8d8]">赖上</span>
        <span className="ml-[2px] font-['DejaVu_Sans',sans-serif] text-[8px] text-[#d8d8d8]">□</span>
        <span className="ml-[3px] text-[#d8d8d8]">你了</span>
        <span className="inline-block origin-center scale-y-[1.800] font-['DejaVu_Sans',sans-serif] text-[9px] text-white">□□□□□</span>
      </div>
    </div>
  );
};

export default App;
